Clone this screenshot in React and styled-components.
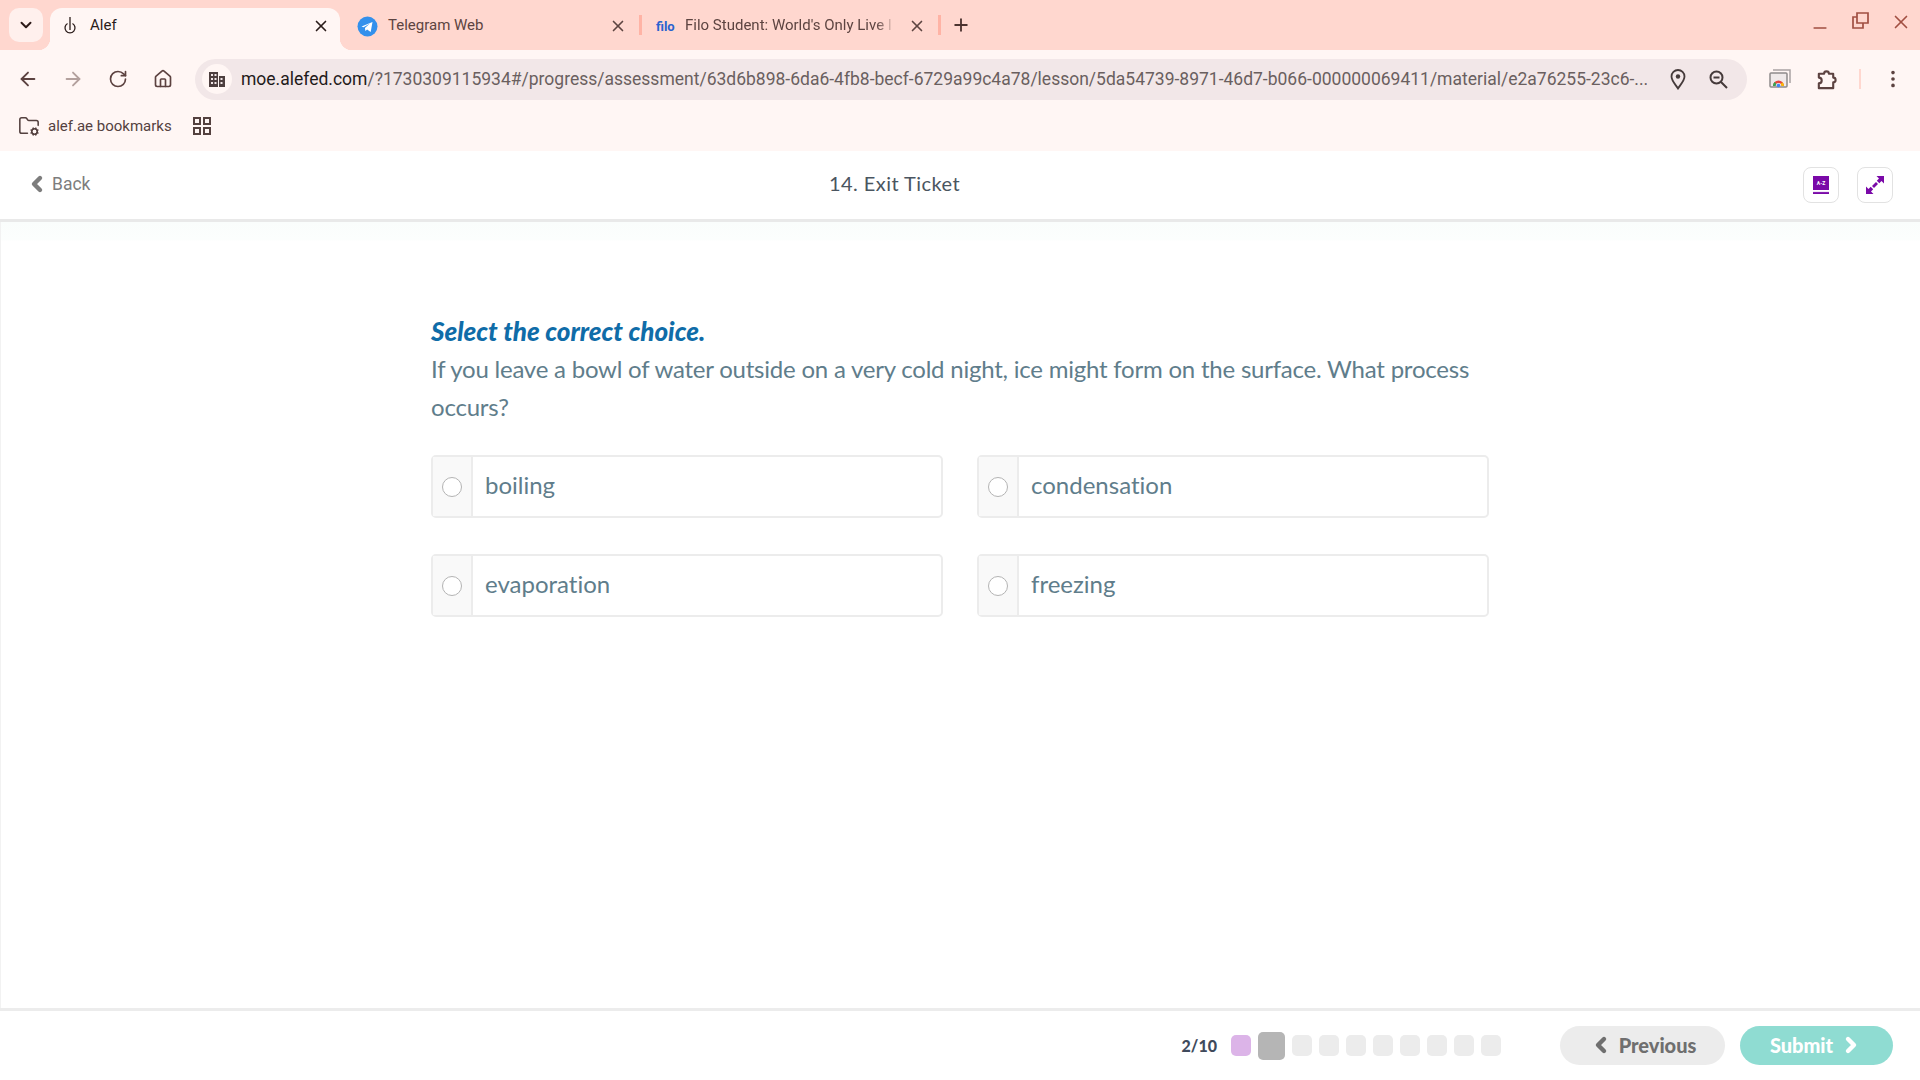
import React from 'react';
import styled, { createGlobalStyle } from 'styled-components';
import { ChevronDown, ChevronLeft, ChevronRight, ArrowLeft, ArrowRight, RotateCw, House, X, Plus, EllipsisVertical, Minus, FolderCog } from 'lucide-react';

const Global = createGlobalStyle`
  html, body { margin: 0; padding: 0; background: #fff; }
  * { box-sizing: border-box; }
  #root { width: 1920px; height: 1080px; overflow: hidden; }
`;

const Page = styled.div`
  width: 1920px;
  height: 1080px;
  display: flex;
  flex-direction: column;
  font-family: Lato, "Open Sans", sans-serif;
  font-variant-ligatures: none;
`;

const TabStrip = styled.div`
  height: 50px;
  background: #ffd7cf;
  display: flex;
  align-items: flex-end;
  font-family: Roboto, sans-serif;
  position: relative;
`;

const TabMenu = styled.div`
  width: 34px;
  height: 34px;
  margin: 0 7px 8px 9px;
  border-radius: 10px;
  background: #fff0ed;
  display: flex;
  align-items: center;
  justify-content: center;
  color: #2d1a18;
`;

const Tab = styled.div`
  width: 290px;
  height: 42px;
  padding: 0 ${(p) => (p.$active ? 10 : 9)}px 6px ${(p) => (p.$active ? 9 : 11)}px;
  display: flex;
  align-items: center;
  border-radius: 12px 12px 0 0;
  position: relative;
  background: ${(p) => (p.$active ? '#fff6f4' : 'transparent')};
  color: ${(p) => (p.$active ? '#2a1c1a' : '#5d4441')};
  ${(p) => p.$active && `
    margin-right: 6px;
    &::before, &::after {
      content: "";
      position: absolute;
      bottom: 0;
      width: 12px;
      height: 12px;
    }
    &::before { left: -12px; background: radial-gradient(circle at 0 0, transparent 12px, #fff6f4 12.5px); }
    &::after { right: -12px; background: radial-gradient(circle at 100% 0, transparent 12px, #fff6f4 12.5px); }
  `}
`;

const TabIcon = styled.span`
  width: 21px;
  flex: none;
  display: flex;
  align-items: center;
  justify-content: center;
`;

const TabTitle = styled.span`
  flex: 1;
  min-width: 0;
  margin: 0 6px 2px 10px;
  font-size: 15px;
  white-space: nowrap;
  -webkit-mask-image: ${(p) => (p.$fade ? 'linear-gradient(to right, #000 88%, transparent 97%)' : 'none')};
`;

const FiloMark = styled.span`
  width: 19px;
  flex: none;
  color: #2a63cf;
  font: 700 13px Roboto, sans-serif;
`;

const TabClose = styled(X)`
  flex: none;
  width: 18px;
  height: 18px;
  stroke-width: 2.2;
`;

const TabDivider = styled.div`
  width: 3px;
  height: 20px;
  margin: 0 3px 15px 3px;
  background: #ffb3a5;
`;

const NewTab = styled(Plus)`
  width: 20px;
  height: 20px;
  margin: 0 0 15px 7px;
  color: #4c3330;
  stroke-width: 2.2;
`;

const WindowControls = styled.div`
  margin-left: auto;
  height: 100%;
  padding: 11px 8px 0 0;
  display: flex;
  align-items: flex-start;
  gap: 20px;
  color: #a14f42;
`;

const RestoreIcon = styled.svg`
  width: 20px;
  height: 20px;
`;

const Toolbar = styled.div`
  height: 50px;
  background: #fff6f4;
  padding: 8px 0 0 5px;
  display: flex;
  align-items: center;
  font-family: Roboto, sans-serif;
`;

const ToolButton = styled.div`
  width: ${(p) => p.$w || 45}px;
  flex: none;
  display: flex;
  align-items: center;
  justify-content: center;
  color: ${(p) => (p.$dim ? '#b3a09d' : '#5c4240')};
`;

const AddressBar = styled.div`
  width: 1552px;
  height: 41px;
  margin: 0 10px;
  padding: 0 9px 0 7px;
  border-radius: 21px;
  background: #f2e7e8;
  display: flex;
  align-items: center;
  flex: none;
`;

const SiteChip = styled.div`
  width: 30px;
  height: 30px;
  border-radius: 50%;
  background: #fff6f4;
  flex: none;
  display: flex;
  align-items: center;
  justify-content: center;
`;

const Url = styled.div`
  width: 1406px;
  margin: 0 11px 0 9px;
  flex: none;
  font-size: 17.5px;
  color: #6a5f5f;
  white-space: nowrap;
  overflow: hidden;
  b { font-weight: 400; color: #1f1a1a; }
`;

const AddressIcon = styled.div`
  width: 40px;
  flex: none;
  display: flex;
  justify-content: center;
`;

const ToolDivider = styled.div`
  width: 2px;
  height: 20px;
  margin: 0 17px 0 10px;
  background: #ffd7cf;
`;

const BookmarksBar = styled.div`
  height: 51px;
  background: #fff6f4;
  padding: 0 0 0 18px;
  display: flex;
  align-items: center;
  font-family: Roboto, sans-serif;
  font-size: 15px;
  color: #54413f;
`;

const BookmarkLabel = styled.span`
  margin: 0 20px 0 8px;
`;

const Header = styled.header`
  height: 71px;
  padding: 0 27px 0 25px;
  border-bottom: 3px solid #e9e9e9;
  display: flex;
  align-items: center;
`;

const BackLink = styled.div`
  width: 137px;
  margin-bottom: 2px;
  display: flex;
  align-items: center;
  gap: 3px;
  color: #7d7d7d;
  font-family: Roboto, sans-serif;
  font-size: 17.5px;
`;

const HeaderTitle = styled.div`
  flex: 1;
  margin-bottom: 5px;
  text-align: center;
  font-size: 20px;
  letter-spacing: 0.45px;
  color: #4a5560;
`;

const HeaderActions = styled.div`
  width: 266px;
  display: flex;
  justify-content: flex-end;
  gap: 18px;
`;

const SquareButton = styled.div`
  width: 36px;
  height: 36px;
  border: 1px solid #e2e2e2;
  border-radius: 8px;
  display: flex;
  align-items: center;
  justify-content: center;
`;

const Main = styled.main`
  flex: 1;
  background: linear-gradient(#fafdfc 0, #fcfefd 18px, #fff 19px);
  border-left: 1px solid #f2f2f2;
  padding: 90px 431px 0 430px;
`;

const Instruction = styled.div`
  font-size: 26px;
  font-weight: 900;
  font-style: italic;
  line-height: 38px;
  color: #0f6ca8;
`;

const Question = styled.p`
  margin: 0;
  font-size: 24px;
  letter-spacing: -0.22px;
  line-height: 38px;
  color: #607d8b;
`;

const Choices = styled.div`
  margin-top: 29px;
  display: grid;
  grid-template-columns: 512px 512px;
  column-gap: 34px;
  row-gap: 36px;
`;

const Choice = styled.div`
  height: 63px;
  border: 2px solid #ececec;
  border-radius: 5px;
  display: flex;
  align-items: stretch;
`;

const RadioCell = styled.div`
  width: 40px;
  background: #f9f9f9;
  border-right: 2px solid #ececec;
  display: flex;
  align-items: center;
  justify-content: center;
`;

const Radio = styled.span`
  width: 20px;
  height: 20px;
  border: 1px solid #b4b4b4;
  border-radius: 50%;
  background: #fff;
`;

const ChoiceText = styled.div`
  padding: 0 0 4px 12px;
  display: flex;
  align-items: center;
  font-size: 24px;
  color: #607d8b;
`;

const Footer = styled.footer`
  height: 72px;
  border-top: 3px solid #ececec;
  padding: 0 27px 0 0;
  display: flex;
  align-items: center;
  justify-content: flex-end;
`;

const Count = styled.div`
  font-size: 16px;
  font-weight: 900;
  color: #3f4a5c;
  margin-right: 14px;
`;

const Steps = styled.div`
  display: flex;
  align-items: center;
  gap: 7px;
  margin-right: 59px;
`;

const Step = styled.span`
  border-radius: 5px;
  width: ${(p) => (p.$current ? 27 : 20)}px;
  height: ${(p) => (p.$current ? 28 : 21)}px;
  background: ${(p) => (p.$current ? '#b5b5b5' : p.$done ? '#dcb4e8' : '#ececec')};
`;

const NavButton = styled.div`
  height: 39px;
  padding-bottom: 1px;
  border-radius: 20px;
  display: flex;
  align-items: center;
  justify-content: center;
  gap: 6px;
  font-size: 20px;
  font-weight: 900;
  width: ${(p) => p.$w}px;
  background: ${(p) => (p.$primary ? '#8fdcd2' : '#ececec')};
  color: ${(p) => (p.$primary ? '#fff' : '#6f6f6f')};
  margin-left: ${(p) => (p.$primary ? 15 : 0)}px;
`;

const AlefIcon = () => (
  <svg width="14" height="20" viewBox="0 0 14 20" fill="none" stroke="#2a1c1a" strokeWidth="1.3">
    <path d="M7 1v13" />
    <path d="M4.5 7.5a5 5 0 1 0 5 0" />
  </svg>
);

const TelegramIcon = () => (
  <svg width="21" height="21" viewBox="0 0 21 21">
    <circle cx="10.5" cy="10.5" r="10" fill="#3390ec" />
    <path d="M4.5 10.5l11-4.5-1.8 10-3.6-2.6-1.7 1.7-.5-3.2 5-4.4-6.3 3.8z" fill="#fff" />
  </svg>
);

const SiteIcon = () => (
  <svg width="16" height="15" viewBox="0 0 16 15" fill="#4d3f3f">
    <path d="M0 0h9v15H0zM10 4h6v11h-6z" />
    <path d="M2 2h2v2H2zM5.500 2h2v2h-2zM2 6h2v2H2zM5.500 6h2v2h-2zM2 10h2v2H2zM5.500 10h2v2h-2zM11.500 6h2v2h-2zM11.500 10h2v2h-2z" fill="#f2e7e8" />
  </svg>
);

const GridIcon = () => (
  <svg width="20" height="20" viewBox="0 0 20 20" fill="none" stroke="#54413f" strokeWidth="2">
    <path d="M2 2h6v6H2zM12 2h6v6h-6zM2 12h6v6H2zM12 12h6v6h-6z" />
  </svg>
);

const PinIcon = () => (
  <svg width="16" height="21" viewBox="0 0 16 21" fill="none" stroke="#453a3a" strokeWidth="1.800">
    <path d="M8 19.500C5 15 1.500 11.500 1.500 7.500a6.500 6.500 0 0 1 13 0c0 4-3.500 7.500-6.500 12z" />
    <circle cx="8" cy="7.500" r="2.200" fill="#453a3a" stroke="none" />
  </svg>
);

const LensIcon = () => (
  <svg width="19" height="19" viewBox="0 0 19 19" fill="none" stroke="#453a3a" strokeWidth="2">
    <circle cx="7.500" cy="7.500" r="6" />
    <path d="M4.500 7.500h6M12 12l6 6" />
  </svg>
);

const CastIcon = () => (
  <svg width="22" height="20" viewBox="0 0 22 20">
    <path d="M4 1h17v13" fill="none" stroke="#a9a3a3" strokeWidth="1.5" />
    <rect x="1" y="4" width="17" height="14" rx="1" fill="#efe9e9" stroke="#8f8a8a" strokeWidth="1.5" />
    <path d="M4 17a5.500 5.500 0 0 1 11 0h-2.500a3 3 0 0 0-6 0z" fill="#e8453c" />
    <path d="M4 17a5.500 5.500 0 0 1 1.600-3.900l1.800 1.800A3 3 0 0 0 6.500 17z" fill="#34a853" />
    <path d="M15 17h-2.500a3 3 0 0 0-.8-2l1.700-1.800A5.500 5.500 0 0 1 15 17z" fill="#fbbc05" />
    <circle cx="9.500" cy="16.500" r="1.800" fill="#4285f4" />
  </svg>
);

const PuzzleIcon = () => (
  <svg width="23" height="23" viewBox="0 0 24 24" fill="none" stroke="#5c4240" strokeWidth="2.200" strokeLinejoin="round">
    <path d="M4 6h5.500a2.500 2.500 0 0 1 5 0H19v4a2.500 2.500 0 0 1 0 5v6H4v-5a3 3 0 0 0 0-6z" />
  </svg>
);

const BookIcon = () => (
  <svg width="16" height="18" viewBox="0 0 16 18">
    <path d="M0 0h16v14H0zM0 15h16v3H0z" fill="#7a09a8" />
    <path d="M0 15.600h16" stroke="#fff" strokeWidth="1" />
    <text x="8" y="9" textAnchor="middle" fontSize="5" fontWeight="700" fontFamily="Roboto, sans-serif" fill="#fff">A-Z</text>
  </svg>
);

const ExpandIcon = () => (
  <svg width="18" height="18" viewBox="0 0 18 18" fill="#7a09a8">
    <path d="M10.500 0H18v7.500l-2.500-2.500-2.200 2.200-2.500-2.500L13 2.500zM7.500 18H0v-7.500l2.500 2.500 2.200-2.200 2.500 2.500L5 15.500z" />
    <path d="M6 10l4-4 2 2-4 4z" />
  </svg>
);

const choices = ['boiling', 'condensation', 'evaporation', 'freezing'];
const steps = [0, 1, 2, 3, 4, 5, 6, 7, 8, 9];

const App = () => {
  return (
    <Page>
      <Global />
      <TabStrip>
        <TabMenu><ChevronDown size={18} strokeWidth={2.6} /></TabMenu>
        <Tab $active>
          <TabIcon><AlefIcon /></TabIcon>
          <TabTitle>Alef</TabTitle>
          <TabClose />
        </Tab>
        <Tab>
          <TabIcon><TelegramIcon /></TabIcon>
          <TabTitle>Telegram Web</TabTitle>
          <TabClose />
        </Tab>
        <TabDivider />
        <Tab>
          <FiloMark>filo</FiloMark>
          <TabTitle $fade>Filo Student: World's Only Live I</TabTitle>
          <TabClose />
        </Tab>
        <TabDivider />
        <NewTab />
        <WindowControls>
          <Minus size={20} style={{ marginTop: 7 }} />
          <RestoreIcon viewBox="0 0 20 20" fill="none" stroke="currentColor" strokeWidth="1.700">
            <path d="M7 2h11v10H7zM7 6H3v11h10v-5" />
          </RestoreIcon>
          <X size={22} strokeWidth={1.800} />
        </WindowControls>
      </TabStrip>

      <Toolbar>
        <ToolButton><ArrowLeft size={22} /></ToolButton>
        <ToolButton $dim><ArrowRight size={22} /></ToolButton>
        <ToolButton><RotateCw size={20} /></ToolButton>
        <ToolButton><House size={20} /></ToolButton>
        <AddressBar>
          <SiteChip><SiteIcon /></SiteChip>
          <Url><b>moe.alefed.com</b>/?1730309115934#/progress/assessment/63d6b898-6da6-4fb8-becf-6729a99c4a78/lesson/5da54739-8971-46d7-b066-000000069411/material/e2a76255-23c6-...</Url>
          <AddressIcon><PinIcon /></AddressIcon>
          <AddressIcon><LensIcon /></AddressIcon>
        </AddressBar>
        <ToolButton $w={46}><CastIcon /></ToolButton>
        <ToolButton $w={46}><PuzzleIcon /></ToolButton>
        <ToolDivider />
        <ToolButton $w={30}><EllipsisVertical size={22} /></ToolButton>
      </Toolbar>

      <BookmarksBar>
        <FolderCog size={22} strokeWidth={1.700} />
        <BookmarkLabel>alef.ae bookmarks</BookmarkLabel>
        <GridIcon />
      </BookmarksBar>

      <Header>
        <BackLink><ChevronLeft size={24} strokeWidth={4.400} />Back</BackLink>
        <HeaderTitle>14. Exit Ticket</HeaderTitle>
        <HeaderActions>
          <SquareButton><BookIcon /></SquareButton>
          <SquareButton><ExpandIcon /></SquareButton>
        </HeaderActions>
      </Header>

      <Main>
        <Instruction>Select the correct choice.</Instruction>
        <Question>If you leave a bowl of water outside on a very cold night, ice might form on the surface. What process occurs?</Question>
        <Choices>
          {choices.map((c) => (
            <Choice key={c}>
              <RadioCell><Radio /></RadioCell>
              <ChoiceText>{c}</ChoiceText>
            </Choice>
          ))}
        </Choices>
      </Main>

      <Footer>
        <Count>2/10</Count>
        <Steps>
          {steps.map((s) => (
            <Step key={s} $done={s === 0} $current={s === 1} />
          ))}
        </Steps>
        <NavButton $w={165}><ChevronLeft size={24} strokeWidth={4.400} />Previous</NavButton>
        <NavButton $w={153} $primary>Submit<ChevronRight size={24} strokeWidth={4.400} /></NavButton>
      </Footer>
    </Page>
  );
};

export default App;
